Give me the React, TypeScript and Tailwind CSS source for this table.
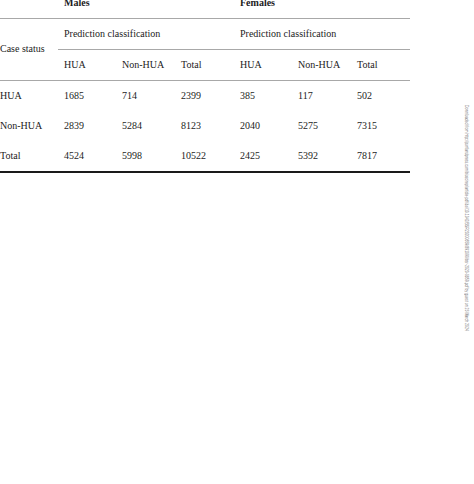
export default function App() {
  const head = "flex items-center leading-none";
  const rows = [
    ["HUA", "1685", "714", "2399", "385", "117", "502"],
    ["Non-HUA", "2839", "5284", "8123", "2040", "5275", "7315"],
    ["Total", "4524", "5998", "10522", "2425", "5392", "7817"],
  ];

  return (
    <div className="relative w-[474px] h-[484px] bg-white overflow-hidden font-['Liberation_Serif',serif] text-[10px] text-[#1c1c1c]">
      <div className="grid w-[410px] grid-cols-[58px_58px_59px_59px_58px_59px_59px]">
        {/* group titles */}
        <div className="col-span-7 h-[19px] border-b border-[#a8a8a8] grid grid-cols-[58px_176px_176px]">
          <div />
          <div className="pl-[6px] font-bold leading-[10px] -mt-[2px]">Males</div>
          <div className="pl-[6px] font-bold leading-[10px] -mt-[2px]">Females</div>
        </div>

        <div className={`row-span-2 border-b border-[#a8a8a8] pb-[2px] ${head}`}>Case status</div>
        <div className={`col-span-3 h-[31px] pl-[6px] border-b border-[#a8a8a8] ${head}`}>
          Prediction classification
        </div>
        <div className={`col-span-3 h-[31px] pl-[6px] border-b border-[#a8a8a8] ${head}`}>
          Prediction classification
        </div>

        {["HUA", "Non-HUA", "Total", "HUA", "Non-HUA", "Total"].map((t, i) => (
          <div key={i} className={`h-[31px] pl-[6px] border-b border-[#a8a8a8] ${head}`}>
            {t}
          </div>
        ))}

        {rows.map((r, ri) =>
          r.map((c, ci) => (
            <div
              key={`${ri}-${ci}`}
              className={`h-[30px] ${ci === 0 ? "" : "pl-[6px]"} ${
                ri === 2 ? "h-[32px] border-b-2 border-[#1a1a1a]" : ""
              } ${head}`}
            >
              {c}
            </div>
          ))
        )}
      </div>

      {/* download watermark along the right edge */}
      <div className="absolute left-[464px] top-[105px] origin-top [transform:scaleY(0.7)] [writing-mode:vertical-rl] font-['Liberation_Sans',sans-serif] text-[5px] leading-none text-[#7a7a7a] whitespace-nowrap">
        Downloaded from http://portlandpress.com/bioscirep/article-pdf/doi/10.1042/BSR20200859/891090/bsr-2020-0859.pdf by guest on 23 March 2024
      </div>
    </div>
  );
}
